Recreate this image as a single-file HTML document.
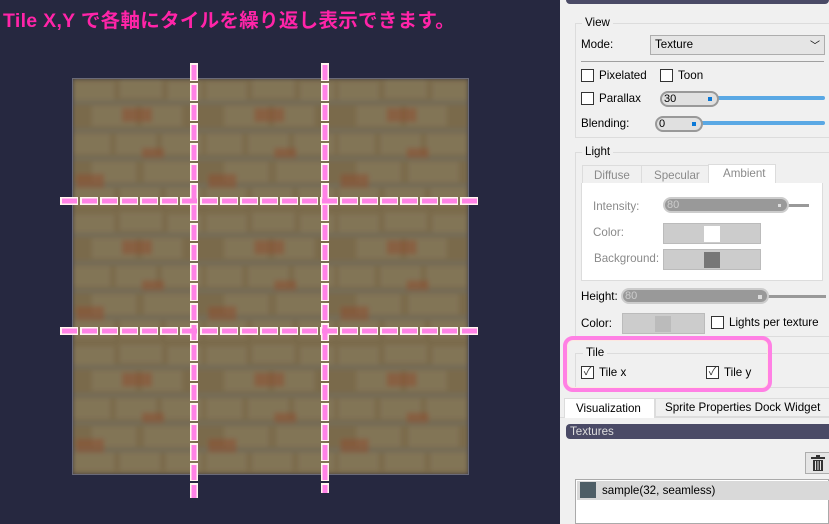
<!DOCTYPE html>
<html><head><meta charset="utf-8"><style>
*{margin:0;padding:0;box-sizing:border-box}
body{width:829px;height:524px;overflow:hidden;background:#262840;position:relative;font-family:"Liberation Sans","Noto Sans CJK JP",sans-serif;font-size:11.6px;color:#000}
.a{position:absolute}
.title{left:3px;top:4px;color:#ff24a8;font-weight:bold;font-size:19.5px;white-space:nowrap;letter-spacing:0.3px}
.panel{left:560px;top:0;width:269px;height:524px;background:#f0f0f0}
.gb{border:1px solid #dcdcdc}
.lbl{background:#f0f0f0;padding:0 3px}
.cb{width:13px;height:13px;border:1px solid #333;background:#fff}
.pill{height:16px;border:2px solid #999;border-radius:8px;background:#e0e0e0;font-size:11px;line-height:12px;padding-left:2px}
.dot{width:4px;height:4px;background:#0a78d7}
.bl{height:4px;background:#5aa8e4;border-radius:2px}
.gr{color:#8a8a8a}
</style></head><body>
<div class="a title">Tile X,Y で各軸にタイルを繰り返し表示できます。</div>

<svg class="a" style="left:0;top:0" width="560" height="524">
<defs>
<filter id="b" x="0" y="0" width="1" height="1"><feGaussianBlur stdDeviation="2.5"/></filter>
<pattern id="p" x="72" y="78" width="132.33" height="132.33" patternUnits="userSpaceOnUse">
<rect width="133" height="133" fill="#7a6a4c"/>
<g fill="#85765a" opacity="0.8">
<rect x="2" y="4" width="40" height="18"/><rect x="48" y="2" width="42" height="18"/><rect x="96" y="4" width="34" height="18"/>
<rect x="20" y="28" width="44" height="20"/><rect x="70" y="28" width="40" height="20"/>
<rect x="2" y="56" width="36" height="20"/><rect x="44" y="56" width="40" height="20"/><rect x="90" y="56" width="40" height="20"/>
<rect x="20" y="84" width="44" height="20"/><rect x="72" y="84" width="50" height="20"/>
<rect x="2" y="110" width="40" height="18"/><rect x="48" y="110" width="40" height="18"/><rect x="94" y="110" width="36" height="18"/>
</g>
<g fill="#6a7070" opacity="0.3"><rect x="0" y="22" width="133" height="5"/><rect x="0" y="50" width="133" height="5"/><rect x="0" y="78" width="133" height="5"/><rect x="0" y="105" width="133" height="5"/></g>
<g fill="#8c5030" opacity="0.55"><rect x="50" y="30" width="30" height="14"/><rect x="4" y="96" width="28" height="14"/><rect x="70" y="70" width="22" height="10"/></g>
</pattern></defs>
<rect x="72" y="78" width="397" height="397" fill="url(#p)" filter="url(#b)"/>
<rect x="72.5" y="78.5" width="396" height="396" fill="none" stroke="#6a6a78" stroke-width="1"/>
<g stroke-linecap="butt">
<g stroke="#fff6ee" stroke-width="8" stroke-dasharray="18 2" fill="none">
<line x1="60" y1="201" x2="478" y2="201"/><line x1="60" y1="331" x2="478" y2="331"/>
<line x1="194" y1="63" x2="194" y2="498"/><line x1="325" y1="63" x2="325" y2="493"/>
</g>
<g stroke="#ff82e6" stroke-width="5" stroke-dasharray="15 5" fill="none">
<line x1="62" y1="201" x2="478" y2="201"/><line x1="62" y1="331" x2="478" y2="331"/>
<line x1="194" y1="65" x2="194" y2="498"/><line x1="325" y1="65" x2="325" y2="493"/>
</g></g>
</svg>

<div class="a panel"></div>
<div class="a" style="left:566px;top:-8px;width:263px;height:12px;background:#4a4a66;border-radius:4px"></div>

<div class="a gb" style="left:575px;top:23px;width:260px;height:115px"></div>
<div class="a lbl" style="left:582px;top:16px">View</div>
<div class="a" style="left:581px;top:38px">Mode:</div>
<div class="a" style="left:650px;top:35px;width:175px;height:20px;border:1px solid #adadad;background:#e5e5e5;padding:2px 4px">Texture<span style="position:absolute;right:4px;top:1px;font-size:10px">﹀</span></div>
<div class="a" style="left:581px;top:61px;width:243px;height:1px;background:#a0a0a0"></div>
<div class="a cb" style="left:581px;top:69px"></div><div class="a" style="left:599px;top:69px">Pixelated</div>
<div class="a cb" style="left:660px;top:69px"></div><div class="a" style="left:678px;top:69px">Toon</div>
<div class="a cb" style="left:581px;top:92px"></div><div class="a" style="left:599px;top:92px">Parallax</div>
<div class="a bl" style="left:715px;top:96px;width:110px"></div>
<div class="a pill" style="left:660px;top:91px;width:59px">30</div><div class="a dot" style="left:708px;top:97px"></div>
<div class="a" style="left:581px;top:117px">Blending:</div>
<div class="a bl" style="left:700px;top:121px;width:125px"></div>
<div class="a pill" style="left:655px;top:116px;width:48px">0</div><div class="a dot" style="left:692px;top:122px"></div>

<div class="a gb" style="left:575px;top:152px;width:260px;height:185px"></div>
<div class="a lbl" style="left:582px;top:145px">Light</div>
<div class="a gr" style="left:582px;top:165px;width:60px;height:19px;border:1px solid #dcdcdc;background:#f0f0f0;padding:3px 0 0 11px">Diffuse</div>
<div class="a gr" style="left:641px;top:165px;width:68px;height:19px;border:1px solid #dcdcdc;background:#f0f0f0;padding:3px 0 0 12px">Specular</div>
<div class="a gr" style="left:708px;top:164px;width:68px;height:20px;border:1px solid #dcdcdc;border-bottom:none;background:#fff;padding:2px 0 0 14px">Ambient</div>
<div class="a" style="left:581px;top:183px;width:242px;height:98px;background:#fff;border:1px solid #dcdcdc;border-top:none"></div>
<div class="a gr" style="left:593px;top:200px">Intensity:</div>
<div class="a" style="left:780px;top:204px;width:29px;height:3px;background:#999"></div>
<div class="a pill" style="left:663px;top:197px;width:126px;background:#999;border-color:#ccc;color:#ccc">80</div><div class="a" style="left:778px;top:204px;width:3px;height:3px;background:#ddd"></div>
<div class="a gr" style="left:593px;top:226px">Color:</div>
<div class="a" style="left:663px;top:223px;width:98px;height:21px;background:#ccc;border:1px solid #bbb"></div><div class="a" style="left:704px;top:226px;width:16px;height:16px;background:#fff"></div>
<div class="a gr" style="left:594px;top:252px">Background:</div>
<div class="a" style="left:663px;top:249px;width:98px;height:21px;background:#ccc;border:1px solid #bbb"></div><div class="a" style="left:704px;top:252px;width:16px;height:16px;background:#777"></div>
<div class="a" style="left:581px;top:290px">Height:</div>
<div class="a" style="left:765px;top:295px;width:61px;height:3px;background:#999"></div>
<div class="a pill" style="left:621px;top:288px;width:148px;background:#999;border-color:#ccc;color:#ccc">80</div><div class="a" style="left:758px;top:295px;width:4px;height:4px;background:#ddd"></div>
<div class="a" style="left:581px;top:317px">Color:</div>
<div class="a" style="left:622px;top:313px;width:83px;height:21px;background:#ccc;border:1px solid #bbb"></div><div class="a" style="left:655px;top:316px;width:16px;height:16px;background:#bbb"></div>
<div class="a cb" style="left:711px;top:316px"></div><div class="a" style="left:729px;top:316px">Lights per texture</div>

<div class="a gb" style="left:575px;top:353px;width:260px;height:35px"></div>
<div class="a lbl" style="left:583px;top:346px">Tile</div>
<div class="a cb" style="left:581px;top:366px;font-size:11px;line-height:11px;text-align:center;color:#333">✓</div><div class="a" style="left:599px;top:366px">Tile x</div>
<div class="a cb" style="left:706px;top:366px;font-size:11px;line-height:11px;text-align:center;color:#333">✓</div><div class="a" style="left:724px;top:366px">Tile y</div>
<div class="a" style="left:563px;top:336px;width:209px;height:56px;border:4px solid #ff80e4;border-radius:10px;box-shadow:0 0 0 1px #fde8e0 inset"></div>

<div class="a" style="left:560px;top:417px;width:269px;height:1px;background:#dcdcdc"></div>
<div class="a" style="left:564px;top:398px;width:91px;height:20px;background:#fff;border:1px solid #dcdcdc;border-bottom:none;padding:3px 0 0 11px">Visualization</div>
<div class="a" style="left:655px;top:398px;width:180px;height:19px;border:1px solid #dcdcdc;padding:2px 0 0 9px">Sprite Properties Dock Widget</div>
<div class="a" style="left:566px;top:424px;width:263px;height:15px;background:#4a4a66;border-radius:4px 0 0 4px;color:#ddd;padding:1px 0 0 4px">Textures</div>
<div class="a" style="left:805px;top:452px;width:26px;height:22px;border:1px solid #adadad;background:#e5e5e5"></div>
<svg class="a" style="left:810px;top:455px" width="16" height="16"><rect x="1" y="2" width="14" height="2" fill="#333"/><rect x="6" y="0" width="4" height="2" fill="#333"/><rect x="3" y="5" width="10" height="11" fill="#333"/><rect x="5" y="6" width="1" height="9" fill="#e5e5e5"/><rect x="7.5" y="6" width="1" height="9" fill="#e5e5e5"/><rect x="10" y="6" width="1" height="9" fill="#e5e5e5"/></svg>
<div class="a" style="left:575px;top:479px;width:254px;height:45px;background:#fff;border:1px solid #aaa"></div>
<div class="a" style="left:577px;top:481px;width:252px;height:19px;background:#d9d9d9"></div>
<div class="a" style="left:580px;top:482px;width:16px;height:16px;background:#4e5e66"></div>
<div class="a" style="left:602px;top:484px">sample(32, seamless)</div>
</body></html>
